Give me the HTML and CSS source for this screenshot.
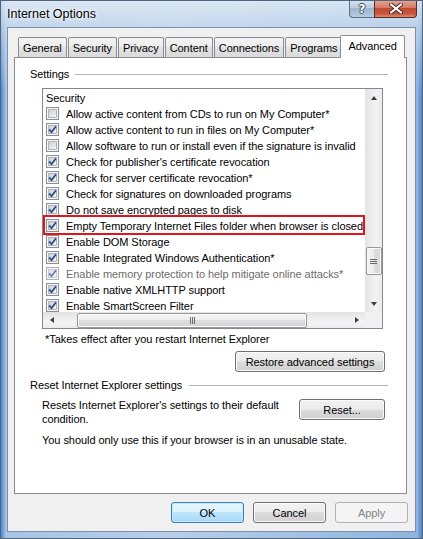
FILE: index.html
```html
<!DOCTYPE html>
<html>
<head>
<meta charset="utf-8">
<title>Internet Options</title>
<link rel="stylesheet" href="styles.css">
</head>
<body>
<svg class="defs" aria-hidden="true">
  <defs>
    <linearGradient id="cbfill" x1="0" y1="0" x2="1" y2="1">
      <stop offset="0" stop-color="#c9ced6"/>
      <stop offset="1" stop-color="#f7f7f7"/>
    </linearGradient>
    <symbol id="cbox" viewBox="0 0 13 13">
      <rect x="0.5" y="0.5" width="12" height="12" fill="#f6f6f6" stroke="#8e8f8f"/>
      <rect x="2.5" y="2.5" width="8" height="8" fill="url(#cbfill)" stroke="#b2b7bd"/>
    </symbol>
    <symbol id="cbon" viewBox="0 0 13 13">
      <use href="#cbox"/>
      <path d="M3.3 6.4 L5.5 9.3 L10 3.2" fill="none" stroke="#2f4d8e" stroke-width="1.8" stroke-linejoin="round"/>
    </symbol>
  </defs>
</svg>
<div class="window">
  <div class="titlebar">
    <span class="title">Internet Options</span>
    <div class="caption">
      <span class="cap help">?</span>
      <span class="cap close">
        <svg width="16" height="11" viewBox="0 0 16 11">
          <path d="M3 1.5 L13 9.5 M13 1.5 L3 9.5" stroke="#4a2a24" stroke-width="4" stroke-linecap="round"/>
          <path d="M3 1.5 L13 9.5 M13 1.5 L3 9.5" stroke="#ffffff" stroke-width="2.2" stroke-linecap="round"/>
        </svg>
      </span>
    </div>
  </div>
  <div class="client">
    <div class="tabs">
      <span class="tab">General</span>
      <span class="tab">Security</span>
      <span class="tab">Privacy</span>
      <span class="tab">Content</span>
      <span class="tab">Connections</span>
      <span class="tab">Programs</span>
      <span class="tab sel">Advanced</span>
    </div>
    <div class="panel">
      <div class="group-head"><span>Settings</span><span class="rule"></span></div>
      <div class="listbox">
        <div class="rows">
          <div class="row head">Security</div>
          <div class="row"><svg class="cb"><use href="#cbox"/></svg><span>Allow active content from CDs to run on My Computer*</span></div>
          <div class="row"><svg class="cb"><use href="#cbon"/></svg><span>Allow active content to run in files on My Computer*</span></div>
          <div class="row"><svg class="cb"><use href="#cbox"/></svg><span>Allow software to run or install even if the signature is invalid</span></div>
          <div class="row"><svg class="cb"><use href="#cbon"/></svg><span>Check for publisher's certificate revocation</span></div>
          <div class="row"><svg class="cb"><use href="#cbon"/></svg><span>Check for server certificate revocation*</span></div>
          <div class="row"><svg class="cb"><use href="#cbon"/></svg><span>Check for signatures on downloaded programs</span></div>
          <div class="row"><svg class="cb"><use href="#cbon"/></svg><span>Do not save encrypted pages to disk</span></div>
          <div class="row hl"><svg class="cb"><use href="#cbon"/></svg><span>Empty Temporary Internet Files folder when browser is closed</span></div>
          <div class="row"><svg class="cb"><use href="#cbon"/></svg><span>Enable DOM Storage</span></div>
          <div class="row"><svg class="cb"><use href="#cbon"/></svg><span>Enable Integrated Windows Authentication*</span></div>
          <div class="row dis"><svg class="cb"><use href="#cbon"/></svg><span>Enable memory protection to help mitigate online attacks*</span></div>
          <div class="row"><svg class="cb"><use href="#cbon"/></svg><span>Enable native XMLHTTP support</span></div>
          <div class="row"><svg class="cb"><use href="#cbon"/></svg><span>Enable SmartScreen Filter</span></div>
        </div>
        <div class="vscroll">
          <div class="sbtn"><i class="arr up"></i></div>
          <div class="vtrack"><div class="vthumb"><i class="grip-h"></i></div></div>
          <div class="sbtn"><i class="arr down"></i></div>
        </div>
        <div class="hscroll">
          <div class="sbtn"><i class="arr left"></i></div>
          <div class="htrack"><div class="hthumb"><i class="grip-v"></i></div></div>
          <div class="sbtn"><i class="arr right"></i></div>
        </div>
        <div class="corner"></div>
      </div>
      <div class="note">*Takes effect after you restart Internet Explorer</div>
      <button class="btn restore">Restore advanced settings</button>
      <div class="group-head reset-head"><span>Reset Internet Explorer settings</span><span class="rule"></span></div>
      <div class="reset-row">
        <p class="desc">Resets Internet Explorer's settings to their default<br>condition.</p>
        <button class="btn reset">Reset...</button>
      </div>
      <p class="warn">You should only use this if your browser is in an unusable state.</p>
    </div>
    <div class="dlg-btns">
      <button class="btn dbtn ok">OK</button>
      <button class="btn dbtn">Cancel</button>
      <button class="btn dbtn apply">Apply</button>
    </div>
  </div>
</div>
</body>
</html>
```

FILE: styles.css
```css
* { box-sizing: border-box; }
html, body { margin: 0; padding: 0; }
body {
  font-family: "Liberation Sans", Arial, sans-serif;
  font-size: 11px;
  letter-spacing: -0.06px;
  color: #000;
  background: #fff;
}
.defs { position: absolute; width: 0; height: 0; overflow: hidden; }

.window {
  width: 423px;
  height: 539px;
  overflow: hidden;
  border: 1px solid #4f6580;
  display: flex;
  flex-direction: column;
  background:
    linear-gradient(to bottom, rgba(226,236,246,0.85) 0, rgba(205,221,238,0.7) 26px, rgba(160,192,228,0) 90px),
    linear-gradient(to right, #4f86cc 0, #a6c4e6 5px, #b7cfe9 40%, #a9c6e6 60%, #8fb5e0 calc(100% - 5px), #4f86cc 100%);
}

.titlebar {
  height: 26px;
  display: flex;
  align-items: flex-start;
}
.title {
  margin: 5px 0 0 6px;
  line-height: 16px;
  font-size: 12.5px;
  letter-spacing: 0;
  text-shadow: 0 0 6px #fff, 0 0 3px #fff;
}
.caption {
  margin-left: auto;
  margin-right: 5px;
  margin-top: -1px;
  display: flex;
}
.cap {
  height: 18px;
  display: flex;
  align-items: center;
  justify-content: center;
}
.help {
  width: 25px;
  border: 1px solid #5d7189;
  border-top: none;
  border-right: none;
  border-radius: 0 0 0 4px;
  background: linear-gradient(to bottom, #d9e4ef 0, #bccde0 45%, #9fb6cf 50%, #b6cae0 100%);
  color: #fff;
  font-family: "DejaVu Sans", sans-serif;
  font-weight: bold;
  font-size: 12px;
  text-shadow: 1px 0 0 #3b4b5e, -1px 0 0 #3b4b5e, 0 1px 0 #3b4b5e, 0 -1px 0 #3b4b5e;
}
.close {
  width: 43px;
  border: 1px solid #5a2c27;
  border-top: none;
  border-radius: 0 0 4px 0;
  background: linear-gradient(to bottom, #e9a898 0, #d77a66 45%, #c24b33 50%, #c8553c 80%, #dc8e72 100%);
}

.client {
  margin: 0 6px;
  height: 505px;
  background: #f0f0f0;
  border: 1px solid #7b8fa8;
  padding: 7px 8px 0 6px;
  display: flex;
  flex-direction: column;
}

.tabs {
  display: flex;
  align-items: flex-end;
  height: 23px;
  margin-bottom: -1px;
  padding-left: 4px;
  position: relative;
  z-index: 1;
}
.tab {
  height: 20px;
  margin-bottom: 1px;
  margin-right: 1px;
  padding: 0 4px;
  border: 1px solid #898c95;
  border-bottom: none;
  border-radius: 2px 2px 0 0;
  background: linear-gradient(to bottom, #f3f3f3 0, #ececec 50%, #e2e2e2 50%, #dadada 100%);
  display: flex;
  align-items: center;
  white-space: nowrap;
}
.tab.sel {
  height: 23px;
  margin-bottom: 0;
  margin-left: -3px;
  padding: 0 7px 3px;
  background: #fff;
}

.panel {
  height: 437px;
  border: 1px solid #898c95;
  background: #fff;
  display: flex;
  flex-direction: column;
  padding: 0 18px 0 15px;
}

.group-head {
  display: flex;
  align-items: center;
  gap: 6px;
  height: 16px;
  margin-top: 8px;
  white-space: nowrap;
}
.group-head .rule {
  flex: 1;
  border-top: 1px solid #b4b4b4;
}
.reset-head { margin-top: 5px; gap: 7px; }

.listbox {
  margin: 6px 0 0 12px;
  width: 341px;
  height: 241px;
  border: 1px solid #828790;
  display: grid;
  grid-template-columns: 1fr 17px;
  grid-template-rows: 1fr 16px;
  background: #fff;
}
.rows {
  overflow: hidden;
  min-width: 0;
  min-height: 0;
}
.row {
  height: 16px;
  display: flex;
  align-items: center;
  gap: 7px;
  padding-left: 3px;
  white-space: nowrap;
  position: relative;
}
.row span { padding-top: 1px; }
.row.head { padding-top: 1px; }
.row .cb { width: 13px; height: 13px; flex: none; }
.row.dis { color: #6d6d6d; }
.row.dis .cb { opacity: 0.7; }
.row.hl::after {
  content: "";
  position: absolute;
  left: 0;
  right: 0;
  top: -2px;
  bottom: -2px;
  border: 2px solid #e2141c;
}

.vscroll {
  display: flex;
  flex-direction: column;
  background: linear-gradient(to right, #e3e3e3 0, #ececec 35%, #f3f3f3 65%, #ebebeb 100%);
}
.hscroll {
  display: flex;
  background: linear-gradient(to bottom, #e3e3e3 0, #ececec 35%, #f3f3f3 65%, #ebebeb 100%);
}
.corner { background: #f0f0f0; }
.sbtn {
  flex: none;
  width: 17px;
  height: 17px;
  display: flex;
  align-items: center;
  justify-content: center;
}
.hscroll .sbtn { height: 16px; }
.arr { display: block; width: 0; height: 0; }
.arr.up { border-left: 3.5px solid transparent; border-right: 3.5px solid transparent; border-bottom: 4px solid #3e3e3e; }
.arr.down { border-left: 3.5px solid transparent; border-right: 3.5px solid transparent; border-top: 4px solid #3e3e3e; }
.arr.left { border-top: 3.5px solid transparent; border-bottom: 3.5px solid transparent; border-right: 4px solid #3e3e3e; }
.arr.right { border-top: 3.5px solid transparent; border-bottom: 3.5px solid transparent; border-left: 4px solid #3e3e3e; }

.vtrack { flex: 1; display: flex; flex-direction: column; align-items: center; }
.vthumb {
  margin-top: 141px;
  width: 16px;
  height: 28px;
  border: 1px solid #979797;
  border-radius: 2px;
  background: linear-gradient(to right, #f4f4f4 0, #ececec 50%, #dedede 50%, #d6d6d6 100%);
  box-shadow: inset 0 0 0 1px #fafafa;
  display: flex;
  align-items: center;
  justify-content: center;
}
.grip-h {
  display: block;
  width: 7px;
  height: 5px;
  background: repeating-linear-gradient(to bottom, #6a6a6a 0, #6a6a6a 1px, transparent 1px, transparent 2px);
}
.htrack { flex: 1; display: flex; align-items: center; }
.hthumb {
  margin-left: 17px;
  width: 230px;
  height: 15px;
  border: 1px solid #979797;
  border-radius: 2px;
  background: linear-gradient(to bottom, #f4f4f4 0, #ececec 50%, #dedede 50%, #d3d3d3 100%);
  box-shadow: inset 0 0 0 1px #fafafa;
  display: flex;
  align-items: center;
  justify-content: center;
}
.grip-v {
  display: block;
  width: 5px;
  height: 7px;
  background: repeating-linear-gradient(to right, #6a6a6a 0, #6a6a6a 1px, transparent 1px, transparent 2px);
}

.note {
  margin-top: 2px;
  padding-left: 15px;
  line-height: 16px;
  white-space: nowrap;
}

.btn {
  font-family: inherit;
  font-size: 11px;
  letter-spacing: inherit;
  color: #000;
  height: 21px;
  padding: 0;
  border: 1px solid #707070;
  border-radius: 3px;
  background: linear-gradient(to bottom, #f2f2f2 0, #ebebeb 50%, #dddddd 50%, #cfcfcf 100%);
  box-shadow: inset 0 0 0 1px #fbfbfb;
}
.restore {
  align-self: flex-end;
  margin-top: 4px;
  margin-right: 3px;
  width: 150px;
}
.reset-row {
  display: flex;
  align-items: flex-start;
  justify-content: space-between;
  margin-top: 5px;
  padding-left: 12px;
  padding-right: 3px;
}
.desc, .warn {
  margin: 0;
  line-height: 14px;
  white-space: nowrap;
}
.reset { width: 86px; margin-top: 1px; }
.warn { margin-top: 7px; padding-left: 12px; }

.dlg-btns {
  display: flex;
  justify-content: flex-end;
  gap: 9px;
  margin-top: 8px;
  margin-right: -1px;
}
.dbtn { width: 73px; }
.ok {
  border-color: #3c7fb1;
  background: linear-gradient(to bottom, #eaf6fd 0, #d9f0fc 50%, #bee6fd 50%, #a7d9f5 100%);
  box-shadow: inset 0 0 0 1px #c6e8fb;
}
.apply {
  border-color: #adb2b5;
  background: #f4f4f4;
  color: #838383;
  box-shadow: none;
}
```
